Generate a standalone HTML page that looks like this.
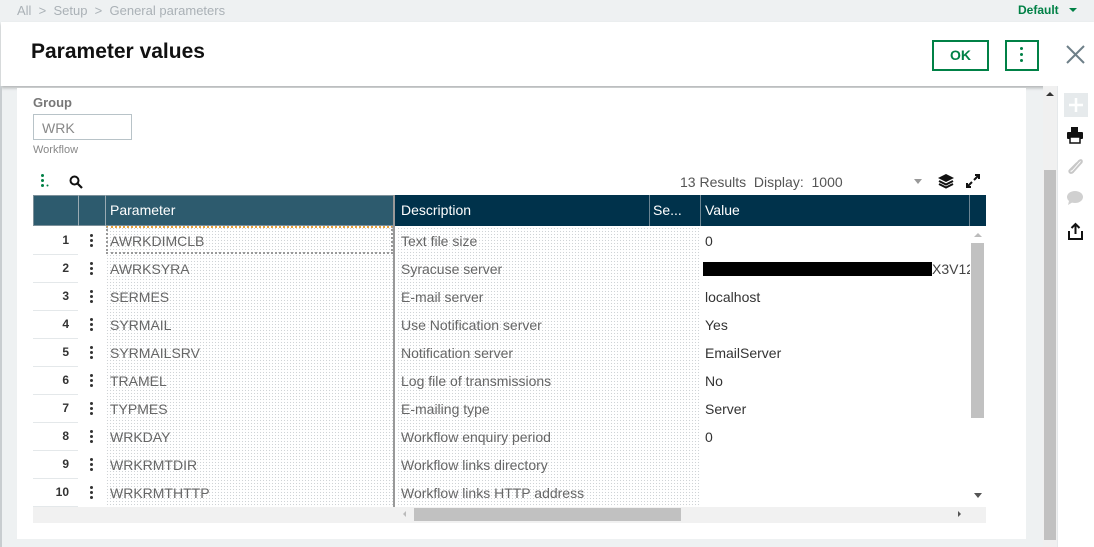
<!DOCTYPE html><html><head><style>
*{box-sizing:border-box;margin:0;padding:0}
body{width:1094px;height:547px;overflow:hidden;background:#eef1f2;font-family:"Liberation Sans",sans-serif;position:relative;font-size:14px}
.a{position:absolute}
.dot{background-color:#fff;background-image:radial-gradient(#cfd3d6 0.6px,transparent 0.8px);background-size:3px 3px}
.t{position:absolute;color:#666;font-size:14px;white-space:nowrap}
</style></head><body>
<div class="a" style="left:0;top:0;width:1094px;height:22px;background:#eef1f2"></div>
<div class="a" style="left:17px;top:3px;font-size:13px;color:#aab1b6">All &nbsp;&gt;&nbsp; Setup &nbsp;&gt;&nbsp; General parameters</div>
<div class="a" style="left:1018px;top:3px;font-size:12px;color:#008146;font-weight:bold">Default</div>
<div class="a" style="left:1069px;top:8px;border-left:4px solid transparent;border-right:4px solid transparent;border-top:4px solid #008146"></div>
<div class="a" style="left:1px;top:22px;width:1093px;height:64px;background:#fff;box-shadow:0 2px 3px rgba(0,0,0,.25)"></div>
<div class="a" style="left:31px;top:40px;font-size:21px;font-weight:bold;color:#111">Parameter values</div>
<div class="a" style="left:932px;top:40px;width:57px;height:31px;border:2px solid #008146;color:#008146;font-weight:bold;font-size:14px;text-align:center;line-height:27px">OK</div>
<div class="a" style="left:1005px;top:40px;width:34px;height:31px;border:2px solid #008146"></div>
<div class="a" style="left:1020px;top:47px;width:3px;height:3px;background:#008146;border-radius:50%;box-shadow:0 6px 0 #008146,0 12px 0 #008146"></div>
<svg class="a" style="left:1066px;top:45px" width="19" height="19"><path d="M1 1L18 18M18 1L1 18" stroke="#6e7f88" stroke-width="2"/></svg>
<div class="a" style="left:0;top:86px;width:2px;height:461px;background:#c8cdd0"></div>
<div class="a" style="left:17px;top:88px;width:1009px;height:451px;background:#fff"></div>
<div class="a" style="left:33px;top:95px;font-size:13px;font-weight:bold;color:#777">Group</div>
<div class="a" style="left:33px;top:114px;width:99px;height:26px;border:1px solid #b8c3c8;color:#888;font-size:14px;padding:5px 8px">WRK</div>
<div class="a" style="left:33px;top:144px;font-size:11px;color:#888">Workflow</div>
<div class="a" style="left:41px;top:174px;width:3px;height:3px;background:#008146;border-radius:50%;box-shadow:0 5px 0 #008146,0 10px 0 #008146,5px 10px 0 -0.5px #008146"></div>
<svg class="a" style="left:69px;top:175px" width="15" height="14"><circle cx="5.5" cy="5.5" r="4" stroke="#111" stroke-width="2" fill="none"/><path d="M8.5 8.5L13 13" stroke="#111" stroke-width="2.2"/></svg>
<div class="a" style="left:680px;top:174px;color:#555;font-size:14px">13 Results&nbsp; Display:&nbsp; 1000</div>
<div class="a" style="left:914px;top:179px;border-left:4px solid transparent;border-right:4px solid transparent;border-top:5px solid #999"></div>
<svg class="a" style="left:937px;top:173px" width="18" height="16"><path d="M9 1L17 5L9 9L1 5Z" fill="#111"/><path d="M2 8L9 11.5L16 8M2 11L9 14.5L16 11" stroke="#111" stroke-width="2" fill="none"/></svg>
<svg class="a" style="left:965px;top:173px" width="16" height="16"><path d="M9 7L14 2M10 2H14V6M7 9L2 14M2 10V14H6" stroke="#111" stroke-width="2" fill="none"/></svg>
<!-- header -->
<div class="a" style="left:33px;top:195px;width:362px;height:31px;background:#2d5b6e;border:1px solid #7c909a"></div>
<div class="a" style="left:78px;top:195px;width:1px;height:31px;background:#9aabb3"></div>
<div class="a" style="left:105px;top:195px;width:1px;height:31px;background:#9aabb3"></div>
<div class="a" style="left:110px;top:202px;color:#fff">Parameter</div>
<div class="a" style="left:395px;top:195px;width:591px;height:31px;background:#00324b"></div>
<div class="a" style="left:649px;top:195px;width:1px;height:31px;background:#6c8593"></div>
<div class="a" style="left:700px;top:195px;width:1px;height:31px;background:#6c8593"></div>
<div class="a" style="left:969px;top:195px;width:1px;height:31px;background:#6c8593"></div>
<div class="a" style="left:401px;top:202px;color:#fff">Description</div>
<div class="a" style="left:653px;top:202px;color:#fff">Se...</div>
<div class="a" style="left:705px;top:202px;color:#fff">Value</div>
<div class="a" style="left:393px;top:195px;width:2px;height:312px;background:#999"></div>
<div class="a dot" style="left:106px;top:227px;width:287px;height:280px"></div>
<div class="a dot" style="left:397px;top:227px;width:303px;height:280px"></div>
<div class="a" style="left:106px;top:226px;width:287px;height:28px;border:2px dotted #999;border-top:2px dotted #e8a23a"></div>
<div id="rows"></div>
<div class="a" style="left:703px;top:262px;width:229px;height:14px;background:#000"></div>
<div class="a" style="left:932px;top:261px;color:#444;font-size:14px;width:38px;overflow:hidden">X3V12</div>
<!-- inner vscroll -->
<div class="a" style="left:970px;top:227px;width:16px;height:280px;background:#fff"></div>
<div class="a" style="left:971px;top:243px;width:13px;height:175px;background:#c1c1c1"></div>
<div class="a" style="left:974px;top:233px;border-left:4px solid transparent;border-right:4px solid transparent;border-bottom:4px solid #bbb"></div>
<div class="a" style="left:974px;top:493px;border-left:4px solid transparent;border-right:4px solid transparent;border-top:5px solid #555"></div>
<!-- hscroll -->
<div class="a" style="left:33px;top:507px;width:953px;height:16px;background:#f1f1f1"></div>
<div class="a" style="left:414px;top:508px;width:267px;height:13px;background:#c1c1c1"></div>
<div class="a" style="left:403px;top:511px;border-top:3px solid transparent;border-bottom:3px solid transparent;border-right:3px solid #bbb"></div>
<div class="a" style="left:958px;top:511px;border-top:3px solid transparent;border-bottom:3px solid transparent;border-left:3px solid #555"></div>
<!-- outer scroll -->
<div class="a" style="left:1043px;top:86px;width:14px;height:461px;background:#f0f0f0"></div>
<div class="a" style="left:1044px;top:170px;width:12px;height:370px;background:#c1c1c1"></div>
<div class="a" style="left:1046px;top:92px;border-left:4px solid transparent;border-right:4px solid transparent;border-bottom:4px solid #333"></div>
<div class="a" style="left:1057px;top:86px;width:37px;height:461px;background:#fff;border-left:1px solid #e5e8ea"></div>
<div class="a" style="left:1064px;top:93px;width:24px;height:24px;background:#e6eaec"></div>
<svg class="a" style="left:1066px;top:95px" width="20" height="20"><path d="M10 3V17M3 10H17" stroke="#fff" stroke-width="2.5"/></svg>
<svg class="a" style="left:1066px;top:126px" width="18" height="18"><rect x="5" y="1" width="7" height="5" fill="#111"/><rect x="1" y="6" width="16" height="7" rx="1" fill="#111"/><rect x="4" y="11" width="10" height="6" fill="#fff" stroke="#111" stroke-width="1.5"/></svg>
<svg class="a" style="left:1066px;top:157px" width="18" height="18"><path d="M5 13L13 4C15 2 17 4 15 6L7 15C5 17 2 15 4 13L11 6" stroke="#c8c8c8" stroke-width="2" fill="none"/></svg>
<svg class="a" style="left:1066px;top:190px" width="18" height="16"><ellipse cx="9" cy="7" rx="8" ry="6" fill="#d0d0d0"/><path d="M3 11L2 15L7 12Z" fill="#d0d0d0"/></svg>
<svg class="a" style="left:1067px;top:222px" width="17" height="19"><path d="M8.5 12V2M4.5 6L8.5 2L12.5 6M2 9V17H15V9" stroke="#111" stroke-width="2" fill="none"/></svg>
<script>
var p=["AWRKDIMCLB","AWRKSYRA","SERMES","SYRMAIL","SYRMAILSRV","TRAMEL","TYPMES","WRKDAY","WRKRMTDIR","WRKRMTHTTP"],
d=["Text file size","Syracuse server","E-mail server","Use Notification server","Notification server","Log file of transmissions","E-mailing type","Workflow enquiry period","Workflow links directory","Workflow links HTTP address"],
v=["0","","localhost","Yes","EmailServer","No","Server","0","",""],h="";
for(var i=0;i<10;i++){var y=227+28*i;
h+='<div class="a" style="left:33px;top:'+(y+27)+'px;width:45px;height:1px;background:#e4e8ea"></div>';
h+='<div class="a" style="left:33px;top:'+(y+6)+'px;width:36px;text-align:right;font-size:12px;font-weight:bold;color:#333">'+(i+1)+'</div>';
h+='<div class="a" style="left:90px;top:'+(y+7)+'px;width:3px;height:3px;background:#333;border-radius:50%;box-shadow:0 5px 0 #333,0 10px 0 #333"></div>';
h+='<div class="t" style="left:110px;top:'+(y+6)+'px">'+p[i]+'</div>';
h+='<div class="t" style="left:401px;top:'+(y+6)+'px">'+d[i]+'</div>';
h+='<div class="t" style="left:705px;top:'+(y+6)+'px;color:#333">'+v[i]+'</div>';}
document.getElementById("rows").outerHTML=h;
</script>
</body></html>
